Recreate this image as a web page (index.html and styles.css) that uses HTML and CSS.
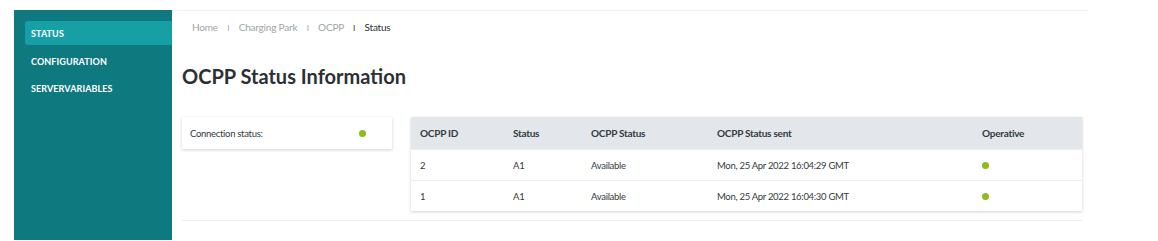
FILE: index.html
```html
<!DOCTYPE html>
<html lang="en">
<head>
    <meta charset="UTF-8" />
    <meta name="viewport" content="width=device-width, initial-scale=1.0" />
    <title>OCPP Status</title>
    <link rel="stylesheet" href="styles.css">
</head>
<body>
    <div class="layout">
        <aside class="sidebar">
            <a href="#" class="active">STATUS</a>
            <a href="#">CONFIGURATION</a>
            <a href="#">SERVERVARIABLES</a>
        </aside>

        <main class="content">
            <nav class="breadcrumb">
                <a href="#">Home</a>
                <span class="sep">I</span>
                <a href="#">Charging Park</a>
                <span class="sep">I</span>
                <a href="#">OCPP</a>
                <span class="sep current">I</span>
                <span class="current">Status</span>
            </nav>

            <h1>OCPP Status Information</h1>

            <section class="panels">
                <div class="connection-card">
                    <span>Connection status:</span>
                    <span class="dot"></span>
                </div>

                <table class="status-table">
                    <thead>
                        <tr>
                            <th class="col-id">OCPP ID</th>
                            <th class="col-status">Status</th>
                            <th class="col-ocpp">OCPP Status</th>
                            <th class="col-sent">OCPP Status sent</th>
                            <th>Operative</th>
                        </tr>
                    </thead>
                    <tbody>
                        <tr>
                            <td>2</td>
                            <td>A1</td>
                            <td>Available</td>
                            <td>Mon, 25 Apr 2022 16:04:29 GMT</td>
                            <td><span class="dot"></span></td>
                        </tr>
                        <tr>
                            <td>1</td>
                            <td>A1</td>
                            <td>Available</td>
                            <td>Mon, 25 Apr 2022 16:04:30 GMT</td>
                            <td><span class="dot"></span></td>
                        </tr>
                    </tbody>
                </table>
            </section>

            <hr class="divider">
        </main>
    </div>
</body>
</html>
```

FILE: styles.css
```css
/* Main Styles */
body {
    margin: 0;
    padding: 0;
    background-color: #ffffff;
    color: #333a40;
    font-family: 'Lato', 'Open Sans', sans-serif;
}

.layout {
    display: flex;
    padding: 10px 0 0 14px;
}

/* Sidebar */
.sidebar {
    width: 158px;
    height: 230px;
    background-color: #0e7a80;
    padding-top: 11px;
    box-sizing: border-box;
    display: flex;
    flex-direction: column;
    align-items: flex-end;
}

.sidebar a {
    display: block;
    width: 147px;
    box-sizing: border-box;
    height: 24px;
    line-height: 25px;
    padding-left: 6px;
    margin-bottom: 3.5px;
    color: #ffffff;
    text-decoration: none;
    font-size: 9px;
    font-weight: bold;
    letter-spacing: 0.1px;
    border-radius: 3px 0 0 3px;
}

.sidebar a.active {
    background-color: #16a0a6;
}

/* Content */
.content {
    width: 916px;
    border-top: 1px solid #f1f2f3;
    padding: 0 6px 0 10px;
    box-sizing: border-box;
}

.breadcrumb {
    font-size: 10px;
    letter-spacing: -0.2px;
    padding: 10px 0 0 10px;
    height: 22px;
    color: #9ea4a8;
}

.breadcrumb a {
    color: #9ea4a8;
    text-decoration: none;
}

.breadcrumb .sep {
    margin: 0 7px;
    font-size: 8px;
}

.breadcrumb .current {
    color: #2c3034;
}

.content h1 {
    margin: 20px 0 0 0;
    font-size: 20px;
    font-weight: bold;
    color: #2c3034;
    line-height: 26px;
}

/* Panels */
.panels {
    display: flex;
    align-items: flex-start;
    gap: 19px;
    margin-top: 28px;
}

.connection-card {
    width: 210px;
    height: 32px;
    box-sizing: border-box;
    display: flex;
    align-items: center;
    justify-content: space-between;
    padding: 0 26px 0 8px;
    font-size: 9.5px;
    letter-spacing: -0.3px;
    box-shadow: 0 1px 3px rgba(0, 0, 0, 0.18);
}

.dot {
    display: inline-block;
    width: 7px;
    height: 7px;
    border-radius: 50%;
    background-color: #8cbd1c;
}

.status-table {
    width: 671px;
    border-collapse: collapse;
    font-size: 9.5px;
    letter-spacing: -0.3px;
    box-shadow: 0 1px 3px rgba(0, 0, 0, 0.18);
}

.status-table th {
    background-color: #e3e7eb;
    text-align: left;
    font-weight: bold;
    font-size: 10px;
    letter-spacing: -0.25px;
    height: 32px;
    padding: 0 9px;
}

.status-table td {
    height: 30px;
    padding: 0 9px;
    border-top: 1px solid #eceef0;
}

.col-id { width: 75px; }
.col-status { width: 60px; }
.col-ocpp { width: 108px; }
.col-sent { width: 247px; }

.divider {
    border: none;
    border-top: 1px solid #eceef0;
    margin: 9px 0 0 0;
}
```
